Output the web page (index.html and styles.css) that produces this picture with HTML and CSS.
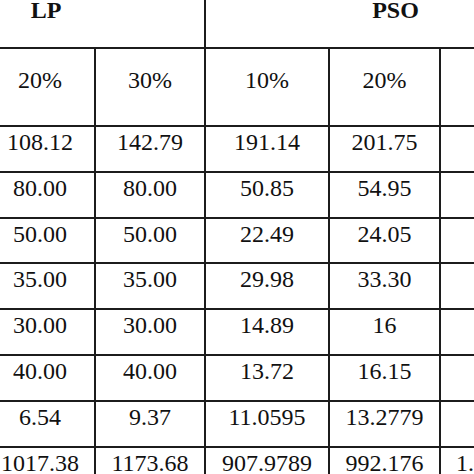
FILE: index.html
```html
<!DOCTYPE html>
<html>
<head>
<meta charset="utf-8">
<link rel="stylesheet" href="styles.css">
</head>
<body>
<div class="viewport">
  <div class="table">
    <div class="cell group group-lp">LP</div>
    <div class="cell group">PSO</div>

    <div class="cell pct">10%</div>
    <div class="cell pct">20%</div>
    <div class="cell pct">30%</div>
    <div class="cell pct">10%</div>
    <div class="cell pct">20%</div>
    <div class="cell pct">30%</div>

    <div class="cell">92.40</div><div class="cell">108.12</div><div class="cell">142.79</div><div class="cell">191.14</div><div class="cell">201.75</div><div class="cell">212.36</div>
    <div class="cell">80.00</div><div class="cell">80.00</div><div class="cell">80.00</div><div class="cell">50.85</div><div class="cell">54.95</div><div class="cell">59.05</div>
    <div class="cell">50.00</div><div class="cell">50.00</div><div class="cell">50.00</div><div class="cell">22.49</div><div class="cell">24.05</div><div class="cell">25.61</div>
    <div class="cell">35.00</div><div class="cell">35.00</div><div class="cell">35.00</div><div class="cell">29.98</div><div class="cell">33.30</div><div class="cell">36.62</div>
    <div class="cell">30.00</div><div class="cell">30.00</div><div class="cell">30.00</div><div class="cell">14.89</div><div class="cell">16</div><div class="cell">17.11</div>
    <div class="cell">40.00</div><div class="cell">40.00</div><div class="cell">40.00</div><div class="cell">13.72</div><div class="cell">16.15</div><div class="cell">18.58</div>
    <div class="cell">5.12</div><div class="cell">6.54</div><div class="cell">9.37</div><div class="cell">11.0595</div><div class="cell">13.2779</div><div class="cell">15.49</div>
    <div class="cell">932.52</div><div class="cell">1017.38</div><div class="cell">1173.68</div><div class="cell">907.9789</div><div class="cell">992.176</div><div class="cell">1.0415e+03</div>
  </div>
</div>
</body>
</html>
```
FILE: styles.css
```css
html, body {
  margin: 0;
  padding: 0;
  background: #fff;
  overflow: hidden;
}

.viewport {
  width: 474px;
  height: 474px;
  overflow: hidden;
  background: #fff;
}

.table {
  display: grid;
  grid-template-columns: 96px 108px 108px 122px 109px 144px;
  grid-template-rows: 76px 76px 44px 44px 43px 44px 44px 44px 44px 44px;
  gap: 2px;
  padding: 2px;
  width: max-content;
  margin: -31px 0 0 -114px;
  background: #1c1c1c;
  font-family: "Liberation Serif", "Times New Roman", serif;
  font-size: 24px;
  line-height: 24px;
  color: #111;
}

.cell {
  background: #fff;
  text-align: center;
  padding-top: 3px;
  white-space: nowrap;
  overflow: hidden;
}

.group {
  grid-column: span 3;
  font-weight: bold;
  padding-top: 27px;
}

.pct {
  padding-top: 19px;
}
```
